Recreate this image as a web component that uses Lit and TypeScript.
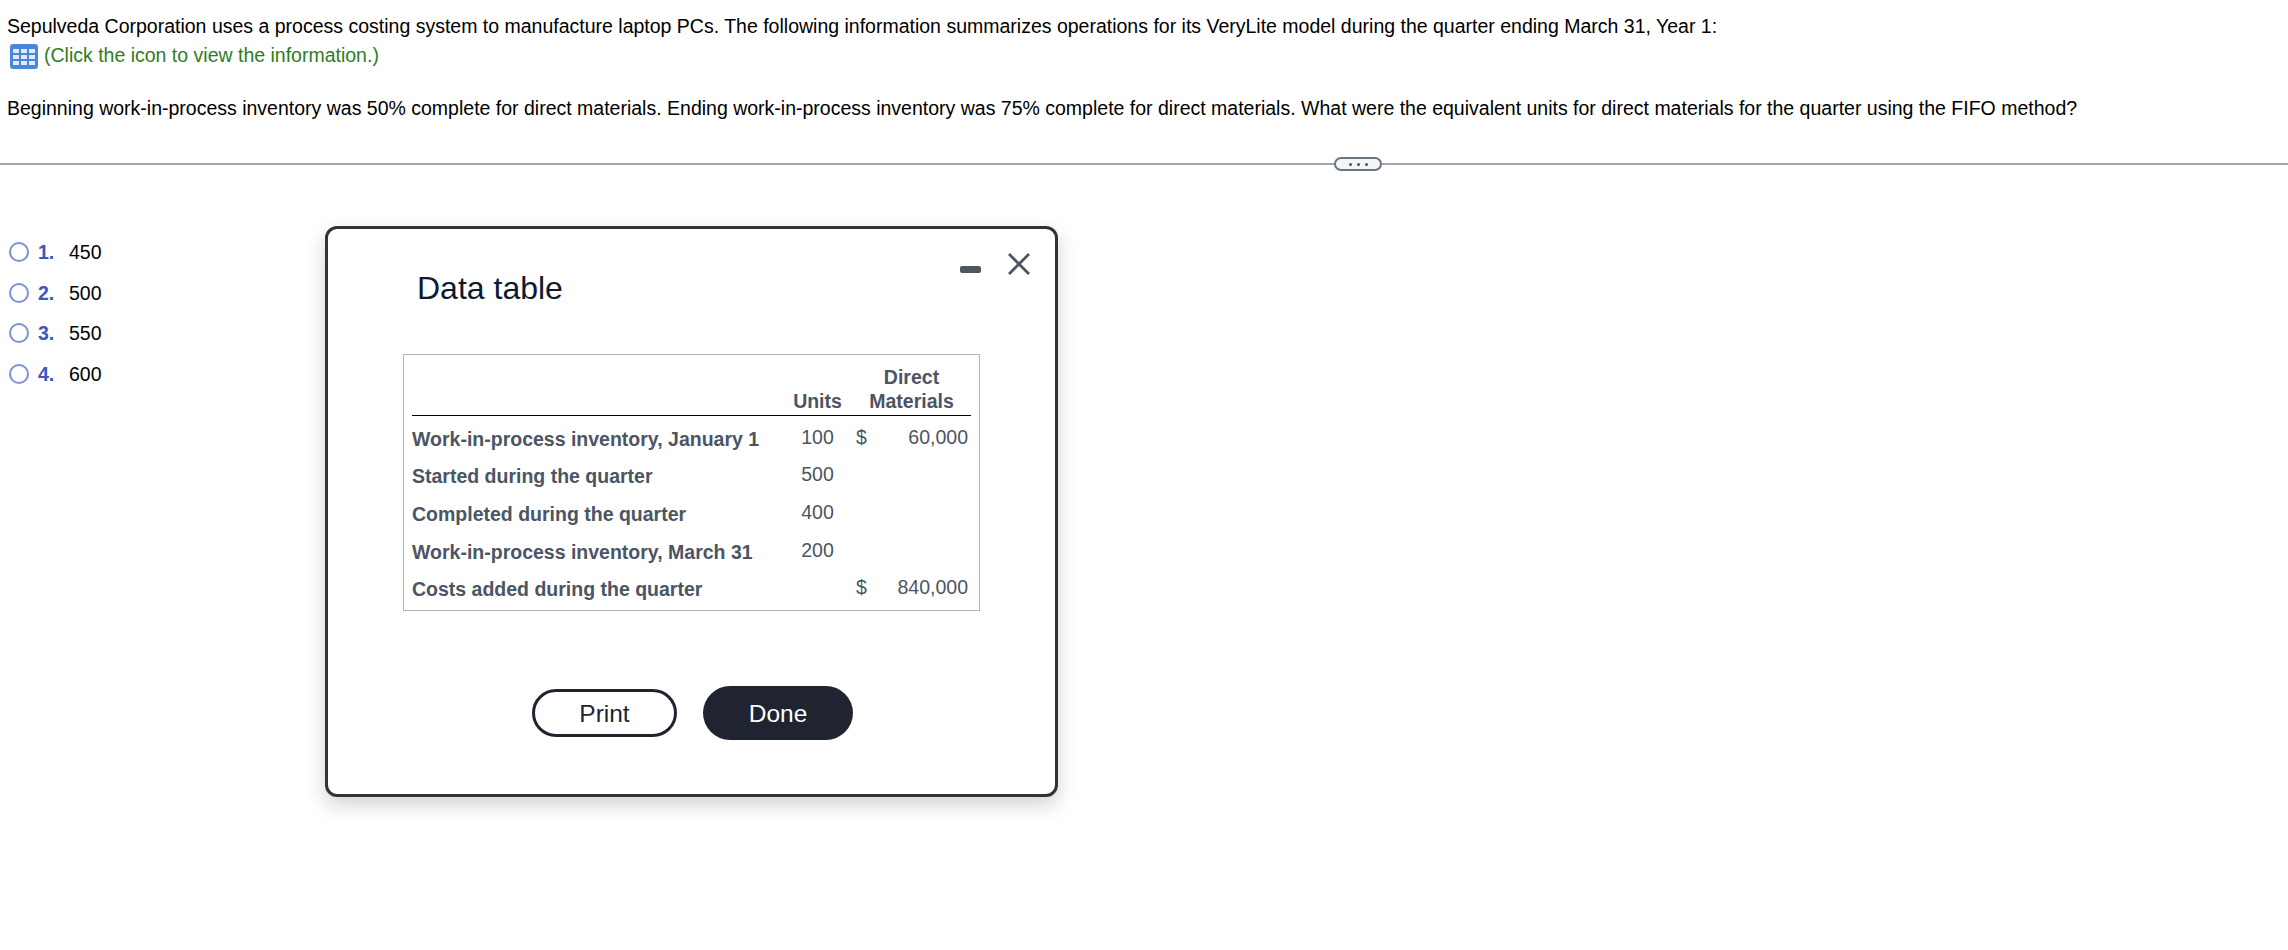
import { LitElement, css, html, svg } from "lit";
import { customElement } from "lit/decorators.js";

const OPTIONS = ["450", "500", "550", "600"];

const ROWS = [
  { label: "Work-in-process inventory, January 1", units: "100", sign: "$", cost: "60,000" },
  { label: "Started during the quarter", units: "500", sign: "", cost: "" },
  { label: "Completed during the quarter", units: "400", sign: "", cost: "" },
  { label: "Work-in-process inventory, March 31", units: "200", sign: "", cost: "" },
  { label: "Costs added during the quarter", units: "", sign: "$", cost: "840,000" },
];

@customElement("app-root")
export class AppRoot extends LitElement {
  static styles = css`
    :host {
      display: block;
      position: relative;
      height: 950px;
      overflow: hidden;
      background: #fff;
      color: #000;
      font-family: "Liberation Sans", Arial, sans-serif;
      font-size: 19.5px;
    }

    .question {
      padding: 12px 7px 0;
      line-height: 29px;
    }

    .hint {
      display: flex;
      align-items: center;
      gap: 6px;
      height: 29px;
      padding-left: 3px;
      color: #2e7d22;
    }

    .grid-icon {
      display: block;
      width: 28px;
      height: 25px;
      margin-top: 2px;
    }

    .ask {
      margin: 24px 0 0;
    }

    .divider {
      position: relative;
      height: 2px;
      margin-top: 40px;
      background: #a2a7ab;
    }

    .more {
      position: absolute;
      left: 1334px;
      top: -6px;
      box-sizing: border-box;
      display: flex;
      align-items: center;
      justify-content: center;
      gap: 5px;
      width: 48px;
      height: 14px;
      border: 2px solid #6b7683;
      border-radius: 7px;
      background: #f3f5f8;
    }

    .more i {
      width: 3px;
      height: 3px;
      border-radius: 50%;
      background: #4a5560;
    }

    .options {
      display: flex;
      flex-direction: column;
      margin: 67px 0 0 9px;
    }

    .option {
      display: flex;
      align-items: center;
      height: 40.5px;
      line-height: 40px;
    }

    .radio {
      box-sizing: border-box;
      width: 20px;
      height: 20px;
      border: 2px solid #7c90d8;
      border-radius: 50%;
    }

    .num {
      width: 31px;
      margin-left: 9px;
      color: #3a57bd;
      font-weight: 700;
    }

    .modal {
      position: absolute;
      left: 325px;
      top: 226px;
      box-sizing: border-box;
      width: 733px;
      height: 571px;
      padding: 0 0 0 75px;
      border: 3px solid #333;
      border-radius: 12px;
      background: #fff;
      box-shadow: 0 8px 20px rgba(0, 0, 0, 0.18);
    }

    .title {
      margin: 0 0 0 14px;
      padding-top: 41px;
      color: #0d1a30;
      font-size: 32px;
      font-weight: 400;
      line-height: 37px;
    }

    .minimize {
      position: absolute;
      left: 632px;
      top: 37px;
      width: 21px;
      height: 7px;
      border-radius: 2px;
      background: #50565f;
    }

    .close {
      position: absolute;
      left: 680px;
      top: 24px;
      width: 22px;
      height: 22px;
    }

    .table-box {
      box-sizing: border-box;
      width: 577px;
      height: 257px;
      margin-top: 47px;
      padding: 0 8px;
      border: 1px solid #b5b5b5;
    }

    table {
      border-collapse: collapse;
      width: 100%;
      color: #4b5563;
      line-height: 24px;
    }

    th {
      box-sizing: border-box;
      height: 60px;
      padding: 0 0 2px;
      border-bottom: 1px solid #000;
      font-weight: 700;
      text-align: center;
      vertical-align: bottom;
    }

    .materials {
      padding-left: 7px;
    }

    td {
      box-sizing: border-box;
      height: 37.6px;
      padding: 6px 0 0;
    }

    .label {
      width: 378px;
      padding: 10px 0 0;
      font-weight: 700;
    }

    .units {
      width: 55px;
      text-align: center;
    }

    .sign {
      width: 21px;
      padding-left: 11px;
    }

    .cost {
      padding-right: 3px;
      text-align: right;
    }

    .actions {
      display: flex;
      align-items: center;
      gap: 26px;
      margin: 75px 0 0 129px;
    }

    button {
      box-sizing: border-box;
      font-family: inherit;
      font-size: 24.5px;
      border-radius: 27px;
      padding: 1px 0 0;
    }

    .print {
      width: 145px;
      height: 48px;
      border: 3px solid #1f2430;
      background: #fff;
      color: #1f2430;
    }

    .done {
      width: 150px;
      height: 54px;
      border: 0;
      background: #1f2430;
      color: #fff;
    }
  `;

  render() {
    return html`
      <div class="question">
        Sepulveda Corporation uses a process costing system to manufacture laptop PCs. The following
        information summarizes operations for its VeryLite model during the quarter ending March 31,
        Year 1:
        <div class="hint">
          <svg class="grid-icon" viewBox="0 0 28 25">
            <rect width="28" height="25" rx="3" fill="#4a86dc" />
            ${[5, 11, 17].map((y) =>
              [3, 11, 19].map(
                (x) => svg`<rect x=${x} y=${y} width="6" height="4" fill="#dfeafa" />`,
              ),
            )}
          </svg>
          <span>(Click the icon to view the information.)</span>
        </div>
        <p class="ask">
          Beginning work-in-process inventory was 50% complete for direct materials. Ending
          work-in-process inventory was 75% complete for direct materials. What were the equivalent
          units for direct materials for the quarter using the FIFO method?
        </p>
      </div>
      <div class="divider">
        <div class="more"><i></i><i></i><i></i></div>
      </div>
      <div class="options">
        ${OPTIONS.map(
          (o, i) => html`
            <div class="option">
              <span class="radio"></span>
              <span class="num">${i + 1}.</span>
              <span>${o}</span>
            </div>
          `,
        )}
      </div>
      <div class="modal">
        <h2 class="title">Data table</h2>
        <div class="minimize"></div>
        <svg class="close" viewBox="0 0 22 22" fill="none" stroke="#4b5563" stroke-width="2.8">
          <path d="M1 1 21 21M21 1 1 21" />
        </svg>
        <div class="table-box">
          <table>
            <thead>
              <tr>
                <th></th>
                <th>Units</th>
                <th class="materials" colspan="2">Direct<br />Materials</th>
              </tr>
            </thead>
            <tbody>
              ${ROWS.map(
                (r) => html`
                  <tr>
                    <td class="label">${r.label}</td>
                    <td class="units">${r.units}</td>
                    <td class="sign">${r.sign}</td>
                    <td class="cost">${r.cost}</td>
                  </tr>
                `,
              )}
            </tbody>
          </table>
        </div>
        <div class="actions">
          <button class="print">Print</button>
          <button class="done">Done</button>
        </div>
      </div>
    `;
  }
}
